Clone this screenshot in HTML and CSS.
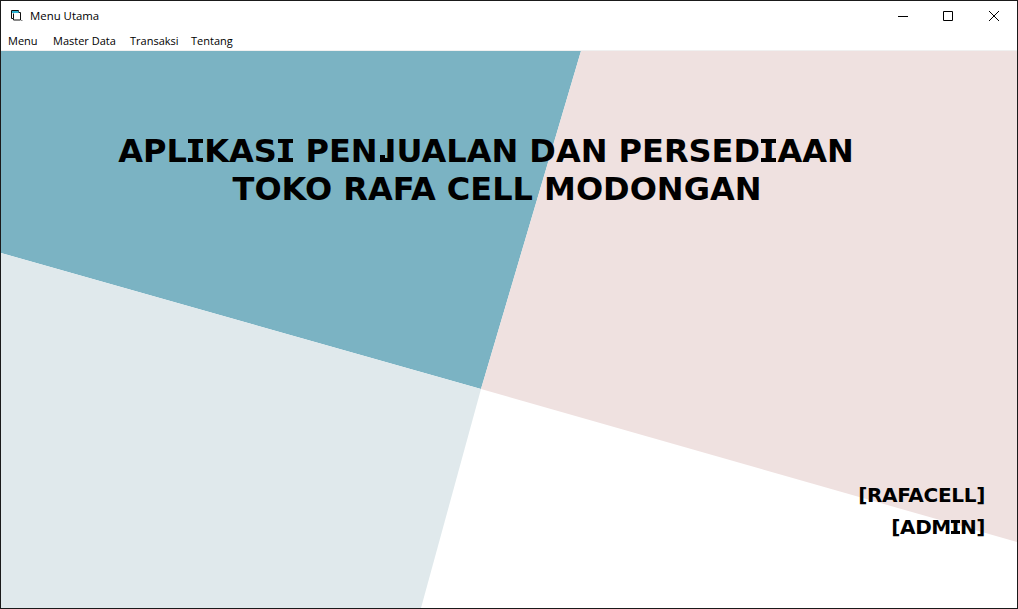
FILE: index.html
```html
<!DOCTYPE html>
<html lang="id">
<head>
<meta charset="utf-8">
<title>Menu Utama</title>
<link rel="stylesheet" href="styles.css">
</head>
<body>
<div class="window">
  <header class="titlebar">
    <div class="title-left">
      <svg class="app-icon" width="16" height="16" viewBox="0 0 16 16" fill="none">
        <path d="M2.500 2.500h7v2h2v7.500h-7v-1.500h-2z" stroke="#111" stroke-width="1" fill="#fff"/>
        <path d="M3 3h6.500v2H3z" fill="#2fb6d6"/>
        <path d="M4.500 5.500v5" stroke="#111"/>
        <path d="M12 12.500h1.500" stroke="#888"/>
      </svg>
      <span class="title-text">Menu Utama</span>
    </div>
    <div class="controls">
      <button class="ctl" aria-label="Minimize"><svg width="10" height="10" viewBox="0 0 10 10"><path d="M0 5.500h10" stroke="#000"/></svg></button>
      <button class="ctl" aria-label="Maximize"><svg width="10" height="10" viewBox="0 0 10 10"><path d="M.5.500h9v9h-9z" stroke="#000" fill="none"/></svg></button>
      <button class="ctl ctl-close" aria-label="Close"><svg width="10" height="10" viewBox="0 0 10 10"><path d="M0 0l10 10M10 0L0 10" stroke="#000" stroke-width="1"/></svg></button>
    </div>
  </header>
  <nav class="menubar">
    <span class="menu-item">Menu</span>
    <span class="menu-item">Master Data</span>
    <span class="menu-item">Transaksi</span>
    <span class="menu-item">Tentang</span>
  </nav>
  <main class="content">
    <svg class="backdrop" viewBox="1 51 1016 557" preserveAspectRatio="none">
      <polygon points="1,51 581,51 481,389 1,253" fill="#7bb3c3"/>
      <polygon points="581,51 1017,51 1017,542 481,389" fill="#efe1e0"/>
      <polygon points="1,253 481,389 421,608 1,608" fill="#e0e9ec"/>
    </svg>
    <h1 class="headline"><span class="line-one">APL<span class="serif-i">I</span>KAS<span class="serif-i">I</span> PEN<span class="wide-j">J</span>UALAN DAN PERSED<span class="serif-i">I</span>AAN</span><span class="line-two">TOKO RAFA CELL MODONGAN</span></h1>
    <div class="user-info">
      <div class="user-name">[RAFACELL]</div>
      <div class="user-role">[ADM<span class="serif-i-small">I</span>N]</div>
    </div>
  </main>
</div>
</body>
</html>
```
FILE: styles.css
```css
* { box-sizing: border-box; }
html, body { margin: 0; height: 100%; overflow: hidden; background: #fff; }
.window {
  width: 1018px;
  height: 609px;
  border: 1px solid #1a1a1a;
  display: flex;
  flex-direction: column;
  font-family: "Open Sans", "Noto Sans", sans-serif;
  color: #000;
}
.titlebar {
  height: 30px;
  display: flex;
  justify-content: space-between;
  align-items: flex-start;
  background: #fff;
}
.title-left {
  display: flex;
  align-items: center;
  gap: 5px;
  height: 29px;
  padding-left: 8px;
}
.app-icon { display: block; }
.title-text { font-size: 11.4px; line-height: 16px; }
.controls { display: flex; }
.ctl {
  width: 45px;
  height: 29px;
  padding: 0 0 0 17px;
  border: 0;
  background: transparent;
  display: flex;
  align-items: center;
  justify-content: flex-start;
}
.ctl-close { width: 46px; padding-left: 18px; }
.menubar {
  height: 20px;
  display: grid;
  grid-template-columns: 45px 77px 61px auto;
  justify-content: start;
  align-items: center;
  padding-left: 7px;
  font-size: 11px;
  background: #fff;
  border-bottom: 1px solid #f0f0f0;
}
.content {
  position: relative;
  flex: 1;
  background: #fff;
  overflow: hidden;
}
.backdrop {
  position: absolute;
  inset: 0;
  width: 100%;
  height: 100%;
}
.headline {
  position: relative;
  margin: 0;
  padding-top: 81px;
  width: 992px;
  text-align: center;
  font-family: "DejaVu Sans", sans-serif;
  font-weight: 700;
  font-size: 32px;
  line-height: 38px;
}
.line-one { display: block; padding-right: 22px; }
.line-two { display: block; }
.serif-i {
  display: inline-block;
  padding: 0 2.8px;
  background-image: linear-gradient(#000, #000), linear-gradient(#000, #000);
  background-repeat: no-repeat;
  background-size: 15px 4px;
  background-position: center 7px, center 26px;
}
.wide-j {
  display: inline-block;
  padding-left: 7px;
  clip-path: inset(0 -4px 8px 0);
  background-image: linear-gradient(#000, #000), linear-gradient(#000, #000);
  background-repeat: no-repeat;
  background-size: 12px 4px, 5px 7px;
  background-position: 2px 26px, 2px 23px;
}
.user-info {
  position: absolute;
  right: 32px;
  bottom: 65px;
  text-align: right;
  font-family: "DejaVu Sans", sans-serif;
  font-weight: 700;
  font-size: 20px;
  line-height: 32px;
}
.user-name { letter-spacing: -0.3px; }
.user-role { letter-spacing: -0.4px; }
.serif-i-small {
  display: inline-block;
  padding: 0 1px;
  background-image: linear-gradient(#000, #000), linear-gradient(#000, #000);
  background-repeat: no-repeat;
  background-size: 9px 3px;
  background-position: center 9px, center 20px;
}
```
